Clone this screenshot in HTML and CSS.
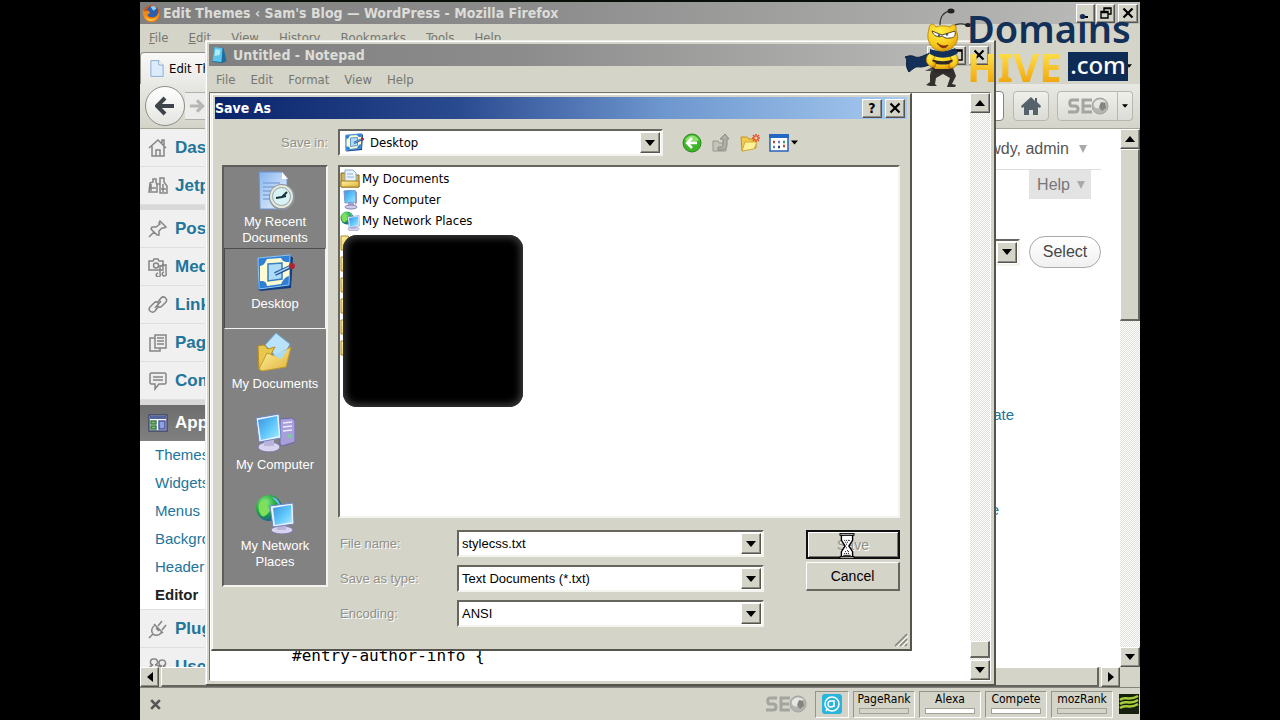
FILE: index.html
```html
<!DOCTYPE html>
<html lang="en">
<head>
    <meta charset="UTF-8">
    <meta name="viewport" content="width=device-width, initial-scale=1.0">
    <title>Edit Themes ‹ Sam's Blog — WordPress</title>
    <link rel="stylesheet" href="styles.css">
</head>
<body>
    <!-- shared icons -->
    <svg class="sprite" aria-hidden="true">
        <defs>
            <linearGradient id="g-screen" x1="0" y1="0" x2="1" y2="1"><stop offset="0" stop-color="#3d8fdc"/><stop offset="0.5" stop-color="#5cc4fa"/><stop offset="1" stop-color="#a5ecff"/></linearGradient>
            <linearGradient id="g-folder" x1="0" y1="0" x2="1" y2="1"><stop offset="0" stop-color="#fff3a0"/><stop offset="1" stop-color="#e0b23a"/></linearGradient>
            <linearGradient id="g-paper" x1="0" y1="0" x2="1" y2="1"><stop offset="0" stop-color="#86b4ee"/><stop offset="1" stop-color="#f2f8ff"/></linearGradient>
            <radialGradient id="g-globe" cx="0.35" cy="0.3" r="0.8"><stop offset="0" stop-color="#8ff08a"/><stop offset="0.5" stop-color="#22a83c"/><stop offset="1" stop-color="#1a4fae"/></radialGradient>
            <radialGradient id="g-bee" cx="0.4" cy="0.3" r="0.8"><stop offset="0" stop-color="#fff04a"/><stop offset="0.6" stop-color="#f8cb1c"/><stop offset="1" stop-color="#d89008"/></radialGradient>
        </defs>
        <symbol id="i-recent" viewBox="0 0 40 40">
            <path d="M4 2h23l5 6v31H5z" fill="url(#g-paper)" stroke="#6f92c8"/>
            <path d="M27 2v7h6z" fill="#fff"/>
            <path d="M8 13h17M8 17h12M8 21h9M8 25h8M8 29h8" stroke="#7fa5dd" stroke-width="1.5"/>
            <circle cx="27" cy="27" r="13" fill="#8d949a"/>
            <circle cx="26.500" cy="26.500" r="11.500" fill="#e6e6da"/>
            <circle cx="26.500" cy="26.500" r="9" fill="#d9f3f5" stroke="#8fa7a8"/>
            <path d="M21 28l6-1 5-5M27 27l4-1" stroke="#17343c" stroke-width="2" fill="none"/>
        </symbol>
        <symbol id="i-desktop" viewBox="0 0 40 40">
            <path d="M3 6l32-3 3 3-2 30-31 3-2-2z" fill="#123f82"/>
            <path d="M3 6l32-3-1 30-30 4z" fill="#2f7fd6" stroke="#8fc6f4"/>
            <path d="M5 14c5-1 5-4 7-7l14-1c2 4 4 4 8 4v14c-4 1-6 4-8 8l-14 2c-1-5-3-5-7-5z" fill="#fffbd0"/>
            <path d="M13 12l14-1v16l-14 2z" fill="#acdcf8" stroke="#3b7ec0" stroke-width="1.500"/>
            <path d="M20 22l15-7" stroke="#1c4f94" stroke-width="4"/>
            <path d="M20 22l14-7" stroke="#a8cdf0" stroke-width="1.500"/>
            <circle cx="37" cy="14" r="3" fill="#b02330"/>
        </symbol>
        <symbol id="i-docs" viewBox="0 0 40 40">
            <path d="M10 13L21 1l14 11-9 18z" fill="#b9e2fb" stroke="#6aa6d4"/>
            <path d="M3 14l6-1 4 4 7-2-12 22-4 1z" fill="#e9c64c" stroke="#b98f20"/>
            <path d="M4 37L12 21l8 3 16-9-5 20-24 4z" fill="url(#g-folder)" stroke="#c09a2c"/>
            <path d="M18 23l15-6-7 10z" fill="#a9dcf5"/>
        </symbol>
        <symbol id="i-computer" viewBox="0 0 40 40">
            <path d="M25 6l12-1 3 3v21l-13 4-2-2z" fill="#a79fda" stroke="#6c64a8"/>
            <path d="M28 10l9-1M28 14l9-1M28 18l9-1" stroke="#eeeaff" stroke-width="1.500"/>
            <circle cx="35" cy="23" r="2" fill="#6fd88c"/>
            <ellipse cx="14" cy="34" rx="11" ry="5" fill="#d8d4ee" stroke="#7d77ac"/>
            <path d="M9 24l10-1v10H9z" fill="#b9b4dc"/>
            <path d="M1 5l23-4 2 24-22 4z" fill="#e8f2ff" stroke="#6e86c0"/>
            <path d="M3 7l19-4 2 20-18 4z" fill="url(#g-screen)"/>
        </symbol>
        <symbol id="i-network" viewBox="0 0 40 40">
            <circle cx="14" cy="14" r="13" fill="url(#g-globe)"/>
            <path d="M4 10c5-8 9-3 8 0s5 4 2 8-6 6-8 3-3-5-2-11z" fill="#7ddf5c"/>
            <path d="M17 3c5 1 8 5 8 9z" fill="#7ab8ff"/>
            <ellipse cx="27" cy="36" rx="11" ry="4" fill="#d8d4ee" stroke="#7d77ac"/>
            <path d="M22 27l9-1v10h-9z" fill="#b9b4dc"/>
            <path d="M15 12l23-3 1 21-21 3z" fill="#e8f2ff" stroke="#6e86c0"/>
            <path d="M18 14l18-3 1 17-17 3z" fill="url(#g-screen)"/>
        </symbol>
        <symbol id="i-folder" viewBox="0 0 20 20">
            <path d="M1 4h7l2 2h9v12H1z" fill="url(#g-folder)" stroke="#b08a28"/>
        </symbol>
        <symbol id="i-docfolder" viewBox="0 0 20 20">
            <path d="M1 4h5l2 2h11v12H1z" fill="#d9b248" stroke="#8a6a1c"/>
            <path d="M5 1h8l3 3v9H5z" fill="#e6f3ff" stroke="#8babd0"/>
            <path d="M7 5h6M7 8h7" stroke="#93b4dc"/>
            <path d="M1 18v-6h18v6z" fill="url(#g-folder)" stroke="#a07c20"/>
        </symbol>
        <symbol id="i-pc" viewBox="0 0 20 20">
            <path d="M4 1l11-1 1 12-11 1z" fill="url(#g-screen)" stroke="#7a94cc"/>
            <path d="M15 1l2 1v11l-2 2z" fill="#9c96cc"/>
            <path d="M8 13h6v3H8z" fill="#a9a3d4"/>
            <ellipse cx="11" cy="17" rx="6" ry="2" fill="#cfcbe8" stroke="#8680b4"/>
        </symbol>
        <symbol id="i-down" viewBox="0 0 10 6"><path d="M0 0h10L5 6z" fill="#000"/></symbol>
        <symbol id="i-up" viewBox="0 0 10 6"><path d="M0 6h10L5 0z" fill="#000"/></symbol>
        <symbol id="i-close" viewBox="0 0 12 12"><path d="M1.500 1.500l9 9M10.500 1.500l-9 9" stroke="#000" stroke-width="2.200"/></symbol>
        <symbol id="i-seo" viewBox="0 0 42 20">
            <g fill="none" stroke="#a4a4a0" stroke-width="3">
                <path d="M12 4H5c-3 0-3 6 0 6h3c4 0 4 6 0 6H1"/>
                <path d="M25 4h-9v12h9M16 10h8"/>
            </g>
            <circle cx="33" cy="10" r="8" fill="#b4b4b0" stroke="#a4a4a0"/>
            <path d="M27 7c3-5 9-4 12-1l-5 1-1 5c-4 1-7-1-6-5z" fill="#e6e6e2"/>
            <path d="M34 6l4 1 1 5-4 3-3-4z" fill="#85857f"/>
        </symbol>
    </svg>

    <div class="screen">
        <!-- Firefox -->
        <div class="browser">
            <header class="titlebar">
                <svg class="ff-icon" viewBox="0 0 20 20"><circle cx="10" cy="10" r="9" fill="#d2560e"/><circle cx="11" cy="8" r="6" fill="#2b5fae"/><path d="M9 3c3-2 6 0 6 2l-3 2z" fill="#8fd0f4"/><path d="M1 6c1 2 2 2 4 1 2 0 4 1 3 3-3 0-3 4 1 4 5 1 8-2 9-7 2 6-2 12-8 12S0 14 1 6z" fill="#ee8a1c"/><path d="M3 12c3 5 9 5 13 2-4 5-11 5-13-2z" fill="#ffd24a"/></svg>
                <span class="title">Edit Themes ‹ Sam's Blog — WordPress - Mozilla Firefox</span>
                <div class="controls">
                    <button class="ctl" aria-label="Minimize"><svg viewBox="0 0 12 12"><path d="M2 10h6" stroke="#000" stroke-width="2"/></svg></button>
                    <button class="ctl" aria-label="Restore"><svg viewBox="0 0 12 12"><path d="M4 4V1h7v6H8M4 1.500h7M1 4.500h7V11H1zM1 5.500h7" fill="none" stroke="#000" stroke-width="1.400"/></svg></button>
                    <button class="ctl last" aria-label="Close"><svg><use href="#i-close"/></svg></button>
                </div>
            </header>
            <nav class="menubar">
                <a href="#"><u>F</u>ile</a><a href="#"><u>E</u>dit</a><a href="#"><u>V</u>iew</a><a href="#">Hi<u>s</u>tory</a><a href="#"><u>B</u>ookmarks</a><a href="#"><u>T</u>ools</a><a href="#"><u>H</u>elp</a>
            </nav>
            <div class="tabs">
                <div class="tab">
                    <svg viewBox="0 0 16 20"><path d="M1 1h9l5 5v13H1z" fill="#dcecfb" stroke="#7fa6cf"/><path d="M10 1v5h5" fill="#fff" stroke="#7fa6cf"/></svg>
                    <span>Edit Themes</span>
                </div>
                <svg class="tab-menu"><use href="#i-down"/></svg>
            </div>
            <div class="navbar">
                <button class="back" aria-label="Back"><svg viewBox="0 0 20 20"><path d="M10 2L2 10l8 8M3 10h16" fill="none" stroke="#3d444b" stroke-width="4"/></svg></button>
                <button class="forward" aria-label="Forward"><svg viewBox="0 0 20 20"><path d="M10 3l7 7-7 7M1 10h15" fill="none" stroke="#b6b6b4" stroke-width="4"/></svg></button>
                <input class="address" type="text" aria-label="Address">
                <button class="tool home" aria-label="Home"><svg viewBox="0 0 20 18"><path d="M10 0L0 9l1 2 2-1v8h5v-5h4v5h5v-8l2 1 1-2-4-4V1h-2v3z" fill="#55616b"/></svg></button>
                <div class="seo-group">
                    <button class="tool seo" aria-label="SEO tools"><svg><use href="#i-seo"/></svg></button>
                    <button class="tool more" aria-label="More"><svg><use href="#i-down"/></svg></button>
                </div>
            </div>

            <div class="viewport">
                <div class="page">
                    <aside class="wp-menu">
                        <a href="#"><svg viewBox="0 0 20 20"><path d="M1 10l9-8 8 8M4 8v10h12V8M8 18v-6h4v6M14 5V2h2v5" /></svg>Dashboard</a>
                        <a href="#"><svg viewBox="0 0 20 20"><path d="M5 3h3v3l1 3v7H1l1-9 3-1zM12 2h4v4l3 4v7h-7V9zM9 8h3M2 12h6M13 13h5M3 8v7M15 8v8" /></svg>Jetpack</a>
                        <div class="wp-sep"></div>
                        <a href="#"><svg viewBox="0 0 20 20"><path d="M12 2l6 6-2 1-2 0-3 3 0 4-2 0-6-6 1-2 4 0 4-3-1-1zM6 13l-5 5" /></svg>Posts</a>
                        <a href="#"><svg viewBox="0 0 20 20"><path d="M1 4h4l1-2h4l1 2h4v9H1zM8 6a2.500 2.500 0 1 1 0 5 2.500 2.500 0 0 1 0-5M12 17V9l6-1v8M12 17a2 2 0 1 1-2-1M18 16a2 2 0 1 1-2-1" /></svg>Media</a>
                        <a href="#"><svg viewBox="0 0 20 20"><path d="M9 8l4-5c3-3 7 1 5 4l-4 4c-2 2-4 1-5 0M11 11l-4 5c-3 3-8-1-5-4l4-4c2-2 4-1 5 0M7 13l6-7" /></svg>Links</a>
                        <a href="#"><svg viewBox="0 0 20 20"><path d="M7 5H2v13h10v-3M7 2h11v13H7zM9 5h7M9 8h7M9 11h7" /></svg>Pages</a>
                        <a href="#"><svg viewBox="0 0 20 20"><path d="M3 2h14l1 1v9l-1 1h-6l-4 5v-5H3l-1-1V3zM5 6h10M5 9h10" /></svg>Comments</a>
                        <div class="wp-sep"></div>
                        <a href="#" class="current"><svg viewBox="0 0 20 20"><path d="M1 2h18v16H1z" fill="#fff" stroke="#3f4a70"/><path d="M2 3h16v3H2z" fill="#54649c" stroke="none"/><path d="M3 8h5v3H3zM3 13h5v3H3z" fill="#7dbd7a" stroke="#3e7d48"/><path d="M11 8h6v8h-6z" fill="#8f9fe0" stroke="#4a58a6"/></svg>Appearance</a>
                        <ul class="wp-sub">
                            <li><a href="#">Themes</a></li>
                            <li><a href="#">Widgets</a></li>
                            <li><a href="#">Menus</a></li>
                            <li><a href="#">Background</a></li>
                            <li><a href="#">Header</a></li>
                            <li><a href="#" class="active">Editor</a></li>
                        </ul>
                        <a href="#"><svg viewBox="0 0 20 20"><path d="M7 6l7 7c-3 4-7 4-9 2s-2-6 2-9zM5 15l-4 4M10 7l4-5M14 11l4-5M6 5l9 9M8 9l3 3" /></svg>Plugins</a>
                        <a href="#"><svg viewBox="0 0 20 20"><path d="M6 2a3 3 0 0 1 1 6c4 0 5 3 5 5M6 2a3 3 0 0 0-1 6c-3 1-4 3-4 5h7M14 3a3 3 0 0 1 1 6c3 1 4 3 4 6h-8c0-3 1-5 3-6a3 3 0 0 1 0-6" /></svg>Users</a>
                    </aside>
                    <main class="wp-main">
                        <div class="wp-head"><span>Howdy, admin</span><i class="tri"></i></div>
                        <div class="wp-help"><button>Help<i class="tri"></i></button></div>
                        <div class="wp-pick">
                            <span class="combo page-combo"><select aria-label="Select theme to edit"><option></option></select><span class="drop"><svg><use href="#i-down"/></svg></span></span>
                            <button class="pill">Select</button>
                        </div>
                        <p class="wp-link first"><a href="#">Page Template</a></p>
                        <p class="wp-link second"><a href="#">Theme</a></p>
                    </main>
                </div>
                <div class="vscroll">
                    <button aria-label="Scroll up"><svg><use href="#i-up"/></svg></button>
                    <div class="thumb tall"></div>
                    <button class="end" aria-label="Scroll down"><svg><use href="#i-down"/></svg></button>
                </div>
            </div>
            <div class="hscroll">
                <button aria-label="Scroll left"><svg viewBox="0 0 6 10"><path d="M6 0v10L0 5z"/></svg></button>
                <div class="thumb"></div>
                <button aria-label="Scroll right"><svg viewBox="0 0 6 10"><path d="M0 0v10l6-5z"/></svg></button>
            </div>
            <footer class="statusbar">
                <button class="plain" aria-label="Close bar"><svg viewBox="0 0 12 12"><path d="M2 2l8 8M10 2l-8 8" stroke="#555" stroke-width="2.500"/></svg></button>
                <svg class="seo-status"><use href="#i-seo"/></svg>
                <div class="panel alert"><svg viewBox="0 0 20 20"><rect width="20" height="20" rx="3" fill="#28b4dc"/><circle cx="10" cy="10" r="7" fill="none" stroke="#fff" stroke-width="1.500"/><path d="M12 13V7H9a3 3 0 1 0 3 3M6 14l-2 3" fill="none" stroke="#fff" stroke-width="1.500"/></svg></div>
                <div class="panel">PageRank<span class="bar"></span></div>
                <div class="panel">Alexa<span class="bar full"></span></div>
                <div class="panel">Compete<span class="bar full"></span></div>
                <div class="panel">mozRank<span class="bar"></span></div>
                <svg class="waves" viewBox="0 0 20 20"><path d="M0 0h20v20H0z" fill="#16200c"/><path d="M1 6c5-5 8 2 18-4M1 10c6-5 9 2 18-4M1 14c6-5 9 2 18-4" fill="none" stroke="#a6cc3a" stroke-width="2.500"/></svg>
            </footer>
        </div>

        <!-- Notepad -->
        <section class="window notepad">
            <header class="titlebar">
                <svg class="np-icon" viewBox="0 0 16 18"><path d="M3 1l9 1 3 13-4 2-10-1z" fill="#1b6f9c"/><path d="M3 1l8 1-1 14-9-1z" fill="#5cc6ea"/><path d="M4 3l5 1-1 5-5 1z" fill="#b2ecfb"/></svg>
                <span class="title">Untitled - Notepad</span>
                <div class="controls">
                    <button class="ctl" aria-label="Minimize"><svg viewBox="0 0 12 12"><path d="M2 10h6" stroke="#000" stroke-width="2"/></svg></button>
                    <button class="ctl" aria-label="Maximize"><svg viewBox="0 0 12 12"><path d="M1 1h10v10H1zM1 2h10" fill="none" stroke="#000" stroke-width="1.500"/></svg></button>
                    <button class="ctl last" aria-label="Close"><svg><use href="#i-close"/></svg></button>
                </div>
            </header>
            <nav class="menubar">
                <a href="#">File</a><a href="#">Edit</a><a href="#">Format</a><a href="#">View</a><a href="#">Help</a>
            </nav>
            <div class="editor">
                <textarea rows="1" aria-label="Document" spellcheck="false">#entry-author-info {</textarea>
                <div class="vscroll">
                    <button aria-label="Scroll up"><svg><use href="#i-up"/></svg></button>
                    <div class="thumb low"></div>
                    <button aria-label="Scroll down"><svg><use href="#i-down"/></svg></button>
                </div>
            </div>
        </section>

        <!-- Save As -->
        <section class="window save-as">
            <header class="titlebar active">
                <span class="title">Save As</span>
                <div class="controls">
                    <button class="ctl last" aria-label="Help">?</button>
                    <button class="ctl last" aria-label="Close"><svg><use href="#i-close"/></svg></button>
                </div>
            </header>
            <form class="dialog-body">
                <div class="look-in">
                    <label for="folder">Save in:</label>
                    <span class="combo">
                        <svg class="combo-icon"><use href="#i-desktop"/></svg>
                        <select id="folder"><option>Desktop</option></select>
                        <span class="drop"><svg><use href="#i-down"/></svg></span>
                    </span>
                    <div class="tools">
                        <button type="button" aria-label="Go back"><svg viewBox="0 0 20 20"><circle cx="10" cy="10" r="9" fill="#3cb528" stroke="#2a8a1c"/><path d="M3 7c3-6 11-6 14 0-4 3-10 3-14 0z" fill="#8fe070"/><path d="M10 5l-5 5 5 5M6 10h9" fill="none" stroke="#fff" stroke-width="2.500"/></svg></button>
                        <button type="button" aria-label="Up one level"><svg viewBox="0 0 20 20"><path d="M2 8h5l1 2h7v8H2z" fill="#c4c4ba" stroke="#96968e"/><path d="M7 14h3c2 0 2-1 2-3V6H9l5-5 4 5h-2v5c0 4-2 6-5 6H7z" fill="#b0b0a6" stroke="#8a8a82"/></svg></button>
                        <button type="button" aria-label="New folder"><svg viewBox="0 0 20 20"><path d="M1 4h6l2 2h7v9L2 18z" fill="#eec94e" stroke="#c29522"/><path d="M2 18L5 9h12l-3 7z" fill="#fff09a" stroke="#d6ac36"/><path d="M16 1v8M12 5h8M13 2l6 6M19 2l-6 6" stroke="#e0522c" stroke-width="1.500"/><circle cx="16" cy="5" r="1.500" fill="#ffd0a0"/></svg></button>
                        <button type="button" class="views" aria-label="Views"><svg viewBox="0 0 20 20"><path d="M1 2h18v16H1z" fill="#fff" stroke="#2862b8" stroke-width="1.500"/><path d="M0 1h20v4H0z" fill="#2468c4"/><path d="M4 9h2M14 13h2" stroke="#c8442c" stroke-width="2.500"/><path d="M9 9h2M4 14h2" stroke="#5c7cc8" stroke-width="2.500"/><path d="M14 9h2" stroke="#3c9c58" stroke-width="2.500"/><path d="M9 14h2" stroke="#2c3c8c" stroke-width="2.500"/></svg><svg class="tiny"><use href="#i-down"/></svg></button>
                    </div>
                </div>
                <div class="dialog-main">
                    <nav class="places">
                        <a href="#"><svg><use href="#i-recent"/></svg>My Recent Documents</a>
                        <a href="#" class="pressed"><svg><use href="#i-desktop"/></svg>Desktop</a>
                        <a href="#"><svg><use href="#i-docs"/></svg>My Documents</a>
                        <a href="#"><svg><use href="#i-computer"/></svg>My Computer</a>
                        <a href="#"><svg><use href="#i-network"/></svg>My Network Places</a>
                    </nav>
                    <div class="dialog-right">
                        <div class="list-box">
                            <ul class="files">
                                <li><svg><use href="#i-docfolder"/></svg>My Documents</li>
                                <li><svg><use href="#i-pc"/></svg>My Computer</li>
                                <li><svg><use href="#i-network"/></svg>My Network Places</li>
                                <li><svg><use href="#i-folder"/></svg></li>
                                <li><svg><use href="#i-folder"/></svg></li>
                                <li><svg><use href="#i-folder"/></svg></li>
                                <li><svg><use href="#i-folder"/></svg></li>
                                <li><svg><use href="#i-folder"/></svg></li>
                                <li><svg><use href="#i-folder"/></svg></li>
                            </ul>
                            <div class="cover"></div>
                        </div>
                        <div class="form-row">
                            <div class="fields">
                                <label for="fname">File name:</label>
                                <span class="combo"><input id="fname" type="text" value="stylecss.txt"><span class="drop"><svg><use href="#i-down"/></svg></span></span>
                                <label for="ftype">Save as type:</label>
                                <span class="combo"><select id="ftype"><option>Text Documents (*.txt)</option></select><span class="drop"><svg><use href="#i-down"/></svg></span></span>
                                <label for="fenc">Encoding:</label>
                                <span class="combo"><select id="fenc"><option>ANSI</option></select><span class="drop"><svg><use href="#i-down"/></svg></span></span>
                            </div>
                            <div class="actions">
                                <button type="button" class="btn default" disabled>Save
                                    <svg class="hourglass" viewBox="0 0 16 30"><path d="M2 3h12v6l-4 6 4 6v6H2v-6l4-6-4-6z" fill="#fff" stroke="#000" stroke-width="1.500"/><path d="M0 1h16v3H0zM0 26h16v3H0z" fill="#000"/><path d="M1 2.500h14M1 27.500h14" stroke="#fff" stroke-width="0.800"/><path d="M5 9h1M7 9h1M9 9h1M6 11h1M8 11h1M10 9h1M7 13h1M7 17h1M8 20h1M6 21h1M5 23h1M7 23h1M9 23h1M4 25h8M9 21h1" stroke="#000"/></svg>
                                </button>
                                <button type="button" class="btn">Cancel</button>
                            </div>
                        </div>
                    </div>
                </div>
            </form>
            <svg class="grip" viewBox="0 0 14 14"><path d="M1 13L13 1M6 13l7-7M11 13l2-2" stroke="#85857c" stroke-width="1.500"/><path d="M3 14L14 3M8 14l6-6" stroke="#fff"/></svg>
        </section>

        <!-- logo over the recording -->
        <div class="logo">
            <svg class="bee" viewBox="0 0 67 80">
                <path d="M36 17C36 8 40 4 46 3" fill="none" stroke="#33332e" stroke-width="1.200"/>
                <ellipse cx="47" cy="3" rx="3.500" ry="2.500" fill="#222"/>
                <path d="M47 20c4-4 10-5 16-3" fill="none" stroke="#33332e" stroke-width="1.200"/>
                <ellipse cx="64" cy="17" rx="3" ry="2" fill="#222"/>
                <path d="M31 43C24 45 16 51 11 49 8 47 4 48 1 49c4 3-1 8 4 15 4-3 6-6 11-5 6 0 12-3 17-8z" fill="#123058" stroke="#0a1c38"/>
                <path d="M28 59l21 1 3 8-4 8 4 1-1 2h-8l3-9-7-4-7 4-1 6 2 2h-7l-4-1 4-3 0-7z" fill="#34302e"/>
                <path d="M21 63l7-4 1 4z" fill="#555"/>
                <path d="M28 45c7-3 17-3 20 0 2 6 1 12-2 16H31c-4-5-4-10-3-16z" fill="url(#g-bee)"/>
                <path d="M28 51c7 3 15 3 21 0v4c-6 2-14 2-20 0z" fill="#2c2826"/>
                <path d="M28 60c6 2 14 2 20 0l-2 5H31z" fill="#2c2826"/>
                <path d="M28 44c-5 2-7 7-5 11 2 3 5 5 8 4l1-4-4-2 3-4z" fill="url(#g-bee)" stroke="#a06c08" stroke-width="0.700"/>
                <path d="M48 44c5 2 7 6 6 11-2 4-5 6-9 5v-4l4-3-3-4z" fill="url(#g-bee)" stroke="#a06c08" stroke-width="0.700"/>
                <path d="M26 41c8 3 18 3 25-1l3 5c-8 6-20 6-28 1z" fill="#123058"/>
                <path d="M25 21c0-5 4-7 7-2 5-2 10-1 14 0 4-5 7-1 6 3 4 8 1 19-12 21-12 1-19-10-15-22z" fill="url(#g-bee)" stroke="#b07c0a" stroke-width="0.800"/>
                <path d="M28 23l10 4 13-4c1 5-1 7-5 7-4 1-6-1-8-2-3 2-9 0-10-5z" fill="#fff" stroke="#4c3408" stroke-width="0.900"/>
                <path d="M34 27l2 1M42 27l2-1" stroke="#345878" stroke-width="2"/>
                <path d="M33 35c4 3 7 4 11 2-2 4-7 4-11-2z" fill="#a32a10" stroke="#6c2408" stroke-width="0.800"/>
            </svg>
            <div class="words">
                <span class="domains">Domains</span>
                <div class="line2"><span class="hive">HIVE</span><span class="com">.com</span></div>
            </div>
        </div>
    </div>
</body>
</html>
```

FILE: styles.css
```css
* {
    box-sizing: border-box;
}
body {
    margin: 0;
    background-color: #000;
    color: #000;
    font-family: "DejaVu Sans Condensed", Tahoma, sans-serif;
    font-size: 13px;
}
a {
    color: inherit;
    text-decoration: none;
}
button, input, select, textarea {
    font: inherit;
    color: inherit;
    margin: 0;
    padding: 0;
    border: 0;
    background: none;
    border-radius: 0;
    appearance: none;
    outline: none;
}
svg {
    display: block;
    flex: none;
}
.sprite {
    position: absolute;
    width: 0;
    height: 0;
}
.screen {
    position: relative;
    height: 100vh;
    margin: 0 140px;
    overflow: hidden;
    background-color: #d4d4c9;
}

/* title bars and menus */
.titlebar {
    display: flex;
    align-items: center;
    height: 22px;
    padding: 0 2px;
    color: #dcdcd8;
    background: linear-gradient(90deg, #808080, #8c8c8c 40%, #bdbdbb);
}
.titlebar.active {
    color: #fff;
    background: linear-gradient(90deg, #0a246a, #2a4a90 35%, #6f97cf 65%, #a6caf0);
}
.title {
    flex: 1;
    font-size: 14px;
    font-weight: bold;
    line-height: 18px;
    white-space: nowrap;
}
.controls {
    display: flex;
    gap: 1px;
}
.ctl, .vscroll button, .hscroll button, .drop {
    display: flex;
    align-items: center;
    justify-content: center;
    background-color: #d4d4c9;
    border: 1px solid #fff;
    border-right-color: #55554e;
    border-bottom-color: #55554e;
    box-shadow: inset -1px -1px 0 #8c8c82;
}
.ctl {
    width: 19px;
    height: 19px;
    color: #000;
    font-weight: bold;
    font-size: 14px;
}
.ctl.last {
    width: 20px;
    margin-left: 2px;
}
.ctl svg {
    width: 12px;
    height: 12px;
}
.menubar {
    display: flex;
    align-items: center;
    color: #77776f;
}

/* browser */
.browser {
    display: flex;
    flex-direction: column;
    height: 100%;
    border-top: 2px solid #0a0f0a;
}
.browser > .titlebar {
    gap: 2px;
}
.ff-icon {
    width: 19px;
    height: 19px;
}
.browser > .menubar {
    height: 26px;
    padding: 0 9px;
    gap: 20px;
}
.tabs {
    display: flex;
    justify-content: space-between;
    align-items: flex-end;
    height: 34px;
    padding-right: 8px;
}
.tab {
    display: flex;
    align-items: center;
    gap: 5px;
    width: 220px;
    height: 32px;
    padding-left: 9px;
    border: 1px solid #8f8f88;
    border-bottom: 0;
    border-radius: 4px 4px 0 0;
    background: linear-gradient(#f8f8f6, #e9e9e6);
}
.tab svg {
    width: 14px;
    height: 19px;
}
.tab-menu {
    width: 6px;
    height: 4px;
    margin-bottom: 16px;
}
.navbar {
    display: flex;
    align-items: center;
    height: 45px;
    padding: 0 7px 0 5px;
    border-bottom: 1px solid #a5a59c;
    background: linear-gradient(#e8e8e4, #d4d4c9);
}
.back {
    display: flex;
    align-items: center;
    justify-content: center;
    width: 40px;
    height: 40px;
    border: 1px solid #8e8e88;
    border-radius: 50%;
    background: linear-gradient(#fff, #e4e4e0);
}
.back svg {
    width: 20px;
    height: 20px;
}
.forward {
    width: 30px;
    height: 28px;
    padding-left: 4px;
    border: 1px solid #b0b0a8;
    border-left: 0;
    background-color: #ececea;
}
.forward svg {
    width: 16px;
    height: 16px;
}
.address {
    flex: 1;
    height: 30px;
    margin: 0 9px 0 4px;
    border: 1px solid #85857e;
    border-radius: 4px;
    background-color: #fff;
}
.tool {
    display: flex;
    align-items: center;
    justify-content: center;
    height: 30px;
    border: 1px solid #b8b8b0;
    border-radius: 4px;
    background: linear-gradient(#efefeb, #dcdcd6);
}
.home {
    width: 36px;
    margin-right: 8px;
}
.home svg {
    width: 20px;
    height: 18px;
}
.seo-group {
    display: flex;
}
.seo {
    width: 61px;
    border-radius: 4px 0 0 4px;
}
.seo svg, .seo-status {
    width: 42px;
    height: 20px;
}
.more {
    width: 15px;
    border-left: 0;
    border-radius: 0 4px 4px 0;
}
.more svg, .tiny {
    width: 6px;
    height: 4px;
}
.viewport {
    display: flex;
    flex: 1;
    min-height: 0;
}
.page {
    display: flex;
    flex: 1;
    min-width: 0;
    overflow: hidden;
    background-color: #fff;
    font-family: "Liberation Sans", Arial, sans-serif;
}

/* wordpress admin */
.wp-menu {
    width: 165px;
    flex: none;
    background-color: #f0f0f0;
    border-right: 1px solid #ccc;
}
.wp-menu > a {
    display: flex;
    align-items: center;
    gap: 7px;
    height: 38px;
    padding-left: 8px;
    border-bottom: 1px solid #dfdfdf;
    color: #21759b;
    font-size: 17px;
    font-weight: bold;
}
.wp-menu > a svg {
    width: 20px;
    height: 20px;
    fill: #eee;
    stroke: #858585;
    stroke-width: 1.5;
}
.wp-menu > a.current {
    height: 36px;
    border: 0;
    background: linear-gradient(#6d6d6d, #808080);
    color: #fff;
}
.wp-sep {
    height: 5px;
    background-color: #d8d8d8;
}
.wp-sub {
    margin: 0;
    padding: 0;
    list-style: none;
    background-color: #fff;
    border-bottom: 1px solid #dfdfdf;
}
.wp-sub a {
    display: block;
    padding-left: 15px;
    color: #21759b;
    font-size: 15px;
    line-height: 28px;
}
.wp-sub a.active {
    color: #222;
    font-weight: bold;
}
.wp-main {
    flex: 1;
    padding-right: 19px;
    color: #555;
    font-size: 16px;
}
.wp-head {
    display: flex;
    align-items: center;
    justify-content: flex-end;
    gap: 10px;
    height: 41px;
    padding-right: 14px;
    border-bottom: 1px solid #ddd;
}
.tri {
    width: 0;
    border: 4px solid transparent;
    border-top: 8px solid #aaa;
    border-bottom: 0;
}
.wp-help {
    display: flex;
    justify-content: flex-end;
    padding-right: 10px;
}
.wp-help button {
    display: flex;
    align-items: center;
    gap: 7px;
    height: 29px;
    padding: 0 6px 0 8px;
    background-color: #e3e3e3;
    color: #777;
}
.wp-pick {
    display: flex;
    align-items: center;
    justify-content: flex-end;
    gap: 9px;
    margin-top: 37px;
}
.page-combo {
    width: 200px;
}
.pill {
    height: 32px;
    width: 72px;
    border: 1px solid #aaa;
    border-radius: 16px;
    background: linear-gradient(#fff, #f0f0f0);
    color: #464646;
}
.wp-link {
    margin: 0;
    color: #21759b;
    font-size: 15px;
    text-align: right;
}
.wp-link.first {
    margin-top: 138px;
    padding-right: 87px;
}
.wp-link.second {
    margin-top: 78px;
    padding-right: 102px;
}

/* scroll bars */
.vscroll {
    display: flex;
    flex-direction: column;
    width: 20px;
    flex: none;
    background: repeating-conic-gradient(#fff 0 25%, #e0e0da 0 50%) 0 0 / 2px 2px;
}
.vscroll button {
    height: 20px;
    flex: none;
}
.vscroll button svg, .drop svg {
    width: 10px;
    height: 6px;
}
.vscroll .end {
    margin-top: auto;
}
.thumb {
    background-color: #d4d4c9;
    border: 1px solid #fff;
    border-right: 2px solid #66665e;
    border-bottom: 2px solid #66665e;
}
.thumb.tall {
    height: 32%;
}
.thumb.low {
    height: 17px;
    margin-top: auto;
    margin-bottom: 2px;
}
.hscroll {
    display: flex;
    gap: 2px;
    height: 20px;
    flex: none;
    padding-right: 20px;
}
.hscroll .thumb {
    flex: 1;
}
.hscroll button {
    width: 19px;
}
.hscroll svg {
    width: 6px;
    height: 10px;
}

/* status bar */
.statusbar {
    display: flex;
    align-items: center;
    gap: 4px;
    height: 33px;
    flex: none;
    border-top: 1px solid #84847c;
}
.plain {
    margin-left: 9px;
    margin-right: auto;
}
.plain svg {
    width: 13px;
    height: 13px;
}
.panel {
    display: flex;
    flex-direction: column;
    align-items: center;
    justify-content: space-between;
    width: 62px;
    height: 27px;
    padding: 0 0 3px;
    border: 1px solid #94948a;
    border-right-color: #fff;
    border-bottom-color: #fff;
    font-size: 12px;
    line-height: 14px;
}
.panel.alert {
    width: 34px;
    margin-left: 4px;
    padding-top: 2px;
}
.alert svg {
    width: 20px;
    height: 20px;
}
.bar {
    width: 50px;
    height: 6px;
    border: 1px solid #a2a298;
}
.bar.full {
    background-color: #fff;
}
.waves {
    width: 20px;
    height: 20px;
    margin: 0 1px 0 2px;
}

/* windows */
.window {
    position: absolute;
    display: flex;
    flex-direction: column;
    padding: 3px;
    background-color: #d4d4c9;
    border: 1px solid #eeeee8;
    border-right: 2px solid #55554e;
    border-bottom: 2px solid #55554e;
    box-shadow: inset 1px 1px 0 #fff;
}
.notepad {
    top: 40px;
    left: 65px;
    right: 144px;
    bottom: 34px;
}
.np-icon {
    width: 17px;
    height: 18px;
    margin-right: 5px;
}
.notepad .menubar {
    height: 26px;
    padding: 0 7px;
    gap: 15px;
}
.editor {
    display: flex;
    flex: 1;
    align-items: flex-end;
    border: 1px solid #74746c;
    border-right-color: #fff;
    border-bottom-color: #fff;
    background-color: #fff;
}
.editor .vscroll {
    align-self: stretch;
}
.editor textarea {
    flex: 1;
    height: 34px;
    padding-left: 82px;
    overflow: hidden;
    resize: none;
    font-family: "DejaVu Sans Mono", monospace;
    font-size: 16px;
    line-height: 20px;
}
.save-as {
    top: 93px;
    left: 71px;
    right: 228px;
    bottom: 69px;
}
.save-as .titlebar {
    padding-left: 0;
}
.dialog-body {
    display: flex;
    flex: 1;
    flex-direction: column;
    gap: 9px;
    padding: 10px 7px 19px 7px;
}
.look-in {
    display: flex;
    align-items: center;
}
.look-in label {
    width: 106px;
    margin-right: 10px;
    text-align: right;
}
.look-in .combo {
    width: 325px;
}
label, .btn:disabled {
    color: #909088;
    text-shadow: 1px 1px 0 #fff;
}
.save-as label, .places, .fields {
    font-family: "Liberation Sans", Arial, sans-serif;
    font-size: 13px;
}
.combo {
    display: flex;
    align-items: stretch;
    height: 27px;
    padding: 1px;
    border: 2px solid #66665e;
    border-right-color: #f4f4ee;
    border-bottom-color: #f4f4ee;
    background-color: #fff;
}
.combo input, .combo select {
    flex: 1;
    min-width: 0;
    padding-left: 2px;
}
.combo-icon {
    width: 20px;
    height: 20px;
    margin: 0 4px 0 3px;
}
.drop {
    width: 20px;
}
.tools {
    display: flex;
    gap: 9px;
    margin-left: 19px;
}
.tools button {
    display: flex;
    align-items: center;
}
.tools svg {
    width: 20px;
    height: 20px;
}
.tools .tiny {
    width: 7px;
    height: 5px;
    margin-left: 2px;
}
.dialog-main {
    display: flex;
    flex: 1;
    gap: 10px;
}
.places {
    width: 106px;
    flex: none;
    align-self: flex-start;
    padding-bottom: 13px;
    border: 2px solid #5d5d5a;
    border-right-color: #f4f4ee;
    border-bottom-color: #f4f4ee;
    background-color: #828282;
    color: #fff;
}
.places a {
    display: flex;
    flex-direction: column;
    align-items: center;
    height: 81px;
    padding: 3px 8px 0;
    gap: 4px;
    line-height: 16px;
    text-align: center;
}
.places a:not(:first-child):not(:last-child) {
    padding: 3px 0 0;
}
.places .pressed {
    border: 1px solid #4c4c4a;
    border-right-color: #f4f4ee;
    border-bottom-color: #f4f4ee;
}
.places svg {
    width: 40px;
    height: 40px;
}
.dialog-right {
    display: flex;
    flex: 1;
    flex-direction: column;
    gap: 12px;
}
.list-box {
    position: relative;
    flex: 1;
    border: 2px solid #66665e;
    border-right-color: #f4f4ee;
    border-bottom-color: #f4f4ee;
    background-color: #fff;
}
.files {
    margin: 0;
    padding: 1px 0 0;
    list-style: none;
}
.files li {
    display: flex;
    align-items: center;
    gap: 2px;
    height: 21px;
}
.files svg {
    width: 20px;
    height: 20px;
}
/* keeps the private files out of view */
.cover {
    position: absolute;
    top: 68px;
    left: 3px;
    width: 180px;
    height: 172px;
    border-radius: 14px;
    background-color: #000;
    box-shadow: inset 0 0 7px 3px #3a3a3a;
}
.form-row {
    display: flex;
    justify-content: space-between;
}
.fields {
    display: grid;
    grid-template-columns: 119px 307px;
    row-gap: 8px;
    align-items: center;
}
.fields label {
    padding-left: 2px;
}
.actions {
    display: flex;
    flex-direction: column;
    gap: 3px;
    width: 94px;
    font-family: "Liberation Sans", Arial, sans-serif;
    font-size: 14px;
}
.btn {
    position: relative;
    height: 29px;
    border: 1px solid #fff;
    border-right: 2px solid #66665e;
    border-bottom: 2px solid #66665e;
    background-color: #d4d4c9;
}
.btn.default {
    border: 2px solid #111;
    box-shadow: inset 1px 1px 0 #fff, inset -1px -1px 0 #77776f;
}
.hourglass {
    position: absolute;
    top: 0;
    left: 31px;
    width: 16px;
    height: 28px;
}
.grip {
    position: absolute;
    right: 2px;
    bottom: 2px;
    width: 14px;
    height: 14px;
}

/* logo */
.logo {
    position: absolute;
    top: 8px;
    right: 10px;
    display: flex;
}
.bee {
    width: 67px;
    height: 80px;
    margin-right: -4px;
}
.words {
    display: flex;
    flex-direction: column;
    gap: 3px;
    width: 163px;
    font-family: "Noto Sans", sans-serif;
    font-weight: bold;
}
.domains {
    color: #123058;
    font-size: 38px;
    font-weight: 600;
    line-height: 41px;
}
.line2 {
    display: flex;
    justify-content: space-between;
    align-items: flex-start;
}
.hive {
    color: transparent;
    font-size: 40px;
    line-height: 30px;
    background: linear-gradient(#ffe14a, #f0a810);
    background-clip: text;
}
.com {
    width: 60px;
    height: 29px;
    margin-right: 2px;
    background-color: #0f2c56;
    color: #fff;
    font-size: 24px;
    font-weight: 500;
    line-height: 26px;
    text-align: center;
}
```
